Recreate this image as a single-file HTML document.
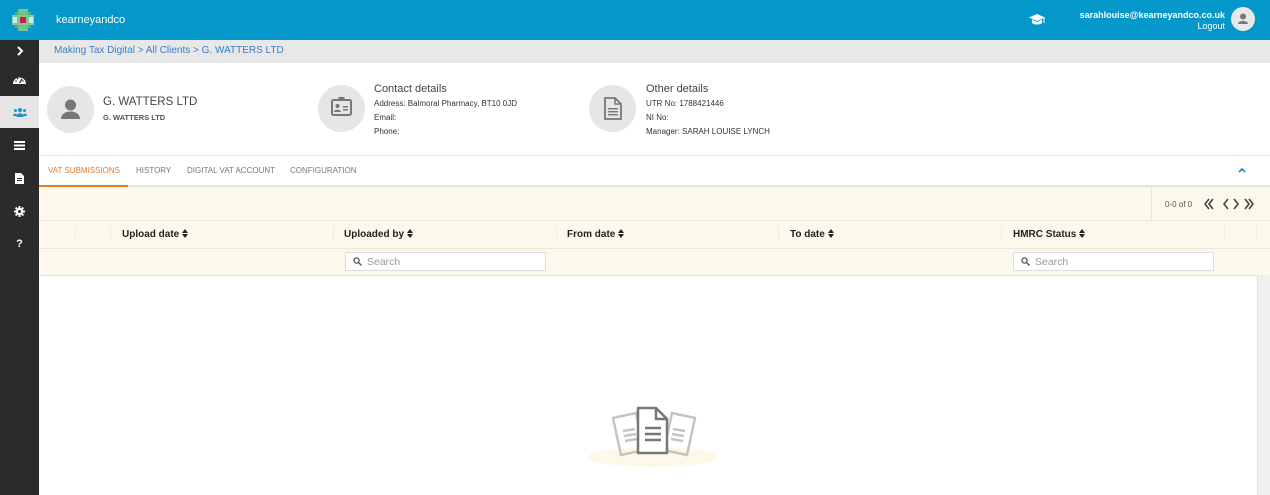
<!DOCTYPE html>
<html><head><style>
*{box-sizing:border-box;margin:0;padding:0}
body{width:1270px;height:495px;overflow:hidden;font-family:"Liberation Sans",sans-serif;background:#fff;position:relative;color:#333}
.abs{position:absolute}
#top{left:0;top:0;width:1270px;height:40px;background:#0398c9}
#side{left:0;top:40px;width:39px;height:455px;background:#2b2b2b}
.si{position:absolute;left:0;width:39px;height:32px;display:flex;align-items:center;justify-content:center;color:#fff;font-size:11px;font-weight:bold}
#bc{left:39px;top:40px;width:1231px;height:23px;background:#e8e8e8;font-size:10px;color:#3a7dc4;padding:5px 0 0 15px}
.circ{position:absolute;width:47px;height:47px;border-radius:50%;background:#e6e6e6}
.small{font-size:8px;color:#333;line-height:14px}
.tab{position:absolute;top:166px;font-size:8px;color:#777}
.hd{position:absolute;top:229px;font-size:10px;font-weight:bold;color:#222}
.hd svg{margin-left:3px;vertical-align:-1px}
.srch{position:absolute;top:252px;width:201px;height:19px;border:1px solid #ddd;background:#fff;font-size:10.5px;color:#999;padding:3px 0 0 21px}
.srch svg{position:absolute;left:7px;top:4px}
.sep{position:absolute;top:226px;width:1px;height:14px;background:#f1ecdf}
</style></head><body>
<div id="top" class="abs">
 <svg class="abs" style="left:10px;top:7px" width="26" height="26" viewBox="0 0 26 26">
  <rect x="8" y="2" width="10" height="22" fill="#8fd18a" opacity=".8"/><rect x="2" y="8" width="22" height="10" fill="#a7dca0" opacity=".8"/>
  <rect x="5" y="5" width="16" height="16" fill="#6cc36a" opacity=".6"/><rect x="3" y="10" width="4" height="6" fill="#cfe8f5"/><rect x="19" y="10" width="4" height="6" fill="#cfe8f5"/>
  <rect x="10" y="10" width="6" height="6" fill="#d6145f"/></svg>
 <div class="abs" style="left:56px;top:14px;color:#fff;font-size:11px">kearneyandco</div>
 <svg class="abs" style="left:1029px;top:13px" width="16" height="13" viewBox="0 0 16 13"><path d="M8 1L0 4.5 8 8 16 4.5z" fill="#fff"/><path d="M3 6.5v3.5c2 2 8 2 10 0V6.5L8 9z" fill="#fff"/><path d="M15 5v5" stroke="#fff"/></svg>
 <div class="abs" style="right:45px;top:10px;color:#fff;font-size:9px;font-weight:bold;text-align:right;line-height:11px">sarahlouise@kearneyandco.co.uk<br><span style="font-weight:normal">Logout</span></div>
 <div class="abs" style="left:1231px;top:7px;width:24px;height:24px;border-radius:50%;background:#e8e8e8"><svg width="24" height="24" viewBox="0 0 24 24"><circle cx="12" cy="9.5" r="3" fill="#777"/><path d="M7 17c0-4 10-4 10 0z" fill="#777"/></svg></div>
</div>
<div id="side" class="abs">
 <div class="si" style="top:0;height:22px"><svg width="8" height="10"><path d="M2 1l4 4-4 4" fill="none" stroke="#fff" stroke-width="2"/></svg></div>
 <div class="si" style="top:24px"><svg width="13" height="10" viewBox="0 0 13 10"><path d="M0 9a6.5 6.5 0 0 1 13 0z" fill="#fff"/><path d="M6.5 8L9 4" stroke="#2b2b2b" stroke-width="1.3"/><circle cx="3" cy="6" r=".8" fill="#2b2b2b"/><circle cx="4.5" cy="3.5" r=".8" fill="#2b2b2b"/><circle cx="10" cy="6" r=".8" fill="#2b2b2b"/></svg></div>
 <div class="si" style="top:56px;background:#e5e5e5;color:#1a8fd0">
  <svg width="14" height="10" viewBox="0 0 14 10"><circle cx="7" cy="3" r="2" fill="#1a8fd0"/><circle cx="2.5" cy="3.5" r="1.5" fill="#1a8fd0"/><circle cx="11.5" cy="3.5" r="1.5" fill="#1a8fd0"/><path d="M3.5 10c0-5 7-5 7 0zM0 9c0-3 4-3 4-1v1zM14 9c0-3-4-3-4-1v1z" fill="#1a8fd0"/></svg></div>
 <div class="si" style="top:89px"><svg width="11" height="9"><rect y="0" width="11" height="2" fill="#fff"/><rect y="3.5" width="11" height="2" fill="#fff"/><rect y="7" width="11" height="2" fill="#fff"/></svg></div>
 <div class="si" style="top:122px"><svg width="9" height="11"><path d="M0 0h6l3 3v8H0z" fill="#fff"/><rect x="2" y="5" width="5" height="1" fill="#2b2b2b"/><rect x="2" y="7" width="5" height="1" fill="#2b2b2b"/></svg></div>
 <div class="si" style="top:155px"><svg width="11" height="11" viewBox="0 0 11 11"><circle cx="5.5" cy="5.5" r="3.6" fill="#fff"/><path d="M5.5 0v11M0 5.5h11M1.6 1.6l7.8 7.8M9.4 1.6l-7.8 7.8" stroke="#fff" stroke-width="2"/><circle cx="5.5" cy="5.5" r="1.5" fill="#2b2b2b"/></svg></div>
 <div class="si" style="top:188px">?</div>
</div>
<div id="bc" class="abs">Making Tax Digital &gt; All Clients &gt; G. WATTERS LTD</div>
<div class="circ" style="left:47px;top:86px"><svg width="47" height="47" viewBox="0 0 47 47"><circle cx="23.5" cy="19" r="5.5" fill="#777"/><path d="M14 33c0-10 19-10 19 0z" fill="#777"/></svg></div>
<div class="abs" style="left:103px;top:96px;font-size:11.5px;color:#444">G. WATTERS LTD</div>
<div class="abs small" style="left:103px;top:111px;font-weight:bold;color:#555;font-size:7.5px">G. WATTERS LTD</div>
<div class="circ" style="left:318px;top:85px"><svg width="47" height="47" viewBox="0 0 47 47"><rect x="14" y="15" width="19" height="15" rx="1.5" fill="none" stroke="#777" stroke-width="2"/><rect x="20.5" y="12" width="6" height="4" fill="#777"/><circle cx="19.5" cy="21" r="2" fill="#777"/><path d="M16 27c0-3 7-3 7 0z" fill="#777"/><rect x="25" y="21" width="5" height="1.5" fill="#777"/><rect x="25" y="24" width="5" height="1.5" fill="#777"/></svg></div>
<div class="abs" style="left:374px;top:83px;font-size:11px;color:#444">Contact details</div>
<div class="abs small" style="left:374px;top:97px">Address: Balmoral Pharmacy, BT10 0JD<br>Email:<br>Phone:</div>
<div class="circ" style="left:589px;top:85px"><svg width="47" height="47" viewBox="0 0 47 47"><path d="M16 13h10l6 6v15H16z" fill="none" stroke="#777" stroke-width="1.8"/><path d="M26 13v6h6" fill="none" stroke="#777" stroke-width="1.5"/><rect x="19" y="23" width="10" height="1.4" fill="#777"/><rect x="19" y="26" width="10" height="1.4" fill="#777"/><rect x="19" y="29" width="10" height="1.4" fill="#777"/></svg></div>
<div class="abs" style="left:646px;top:83px;font-size:11px;color:#444">Other details</div>
<div class="abs small" style="left:646px;top:97px">UTR No: 1788421446<br>NI No:<br>Manager: SARAH LOUISE LYNCH</div>
<div class="abs" style="left:39px;top:155px;width:1231px;height:1px;background:#e4e4e4"></div>
<div class="tab" style="left:48px;color:#e07b2a">VAT SUBMISSIONS</div>
<div class="tab" style="left:136px">HISTORY</div>
<div class="tab" style="left:187px">DIGITAL VAT ACCOUNT</div>
<div class="tab" style="left:290px">CONFIGURATION</div>
<svg class="abs" style="left:1238px;top:167px" width="8" height="6"><path d="M1 5l3-3 3 3" fill="none" stroke="#1a8fd0" stroke-width="1.8"/></svg>
<div class="abs" style="left:39px;top:185px;width:1231px;height:2px;background:#e2e2e2"></div>
<div class="abs" style="left:39px;top:185px;width:89px;height:2px;background:#e07b2a"></div>
<div class="abs" style="left:39px;top:187px;width:1231px;height:88px;background:#fdf8ec"></div>
<div class="abs" style="left:39px;top:220px;width:1231px;height:1px;background:#ece6d6"></div>
<div class="abs" style="left:39px;top:248px;width:1231px;height:1px;background:#ece6d6"></div>
<div class="abs" style="left:39px;top:275px;width:1218px;height:1px;background:#e6e0d0"></div>
<div class="abs" style="left:1151px;top:187px;width:1px;height:33px;background:#ece6d6"></div>
<div class="abs" style="left:1165px;top:200px;font-size:8px;color:#555">0-0 of 0</div>
<svg class="abs" style="left:1204px;top:198px" width="50" height="12" viewBox="0 0 50 12" fill="none" stroke="#444" stroke-width="1.6"><path d="M5 1L1 6l4 5M9 1L5 6l4 5M24 1l-4 5 4 5M30 1l4 5-4 5M41 1l4 5-4 5M45 1l4 5-4 5"/></svg>
<div class="sep" style="left:75px"></div><div class="sep" style="left:110px"></div><div class="sep" style="left:333px"></div><div class="sep" style="left:556px"></div><div class="sep" style="left:778px"></div><div class="sep" style="left:1001px"></div><div class="sep" style="left:1224px"></div><div class="sep" style="left:1256px"></div>
<div class="hd" style="left:122px">Upload date<svg width="6" height="9"><path d="M0 4L3 0l3 4zM0 5l3 4 3-4z" fill="#222"/></svg></div>
<div class="hd" style="left:344px">Uploaded by<svg width="6" height="9"><path d="M0 4L3 0l3 4zM0 5l3 4 3-4z" fill="#222"/></svg></div>
<div class="hd" style="left:567px">From date<svg width="6" height="9"><path d="M0 4L3 0l3 4zM0 5l3 4 3-4z" fill="#222"/></svg></div>
<div class="hd" style="left:790px">To date<svg width="6" height="9"><path d="M0 4L3 0l3 4zM0 5l3 4 3-4z" fill="#222"/></svg></div>
<div class="hd" style="left:1013px">HMRC Status<svg width="6" height="9"><path d="M0 4L3 0l3 4zM0 5l3 4 3-4z" fill="#222"/></svg></div>
<div class="srch" style="left:345px"><svg width="9" height="9"><circle cx="3.5" cy="3.5" r="2.6" fill="none" stroke="#555" stroke-width="1.3"/><path d="M5.5 5.5L8.5 8.5" stroke="#555" stroke-width="1.4"/></svg>Search</div>
<div class="srch" style="left:1013px"><svg width="9" height="9"><circle cx="3.5" cy="3.5" r="2.6" fill="none" stroke="#555" stroke-width="1.3"/><path d="M5.5 5.5L8.5 8.5" stroke="#555" stroke-width="1.4"/></svg>Search</div>
<div class="abs" style="left:1257px;top:275px;width:13px;height:220px;background:#f0f0f0;border-left:1px solid #e2e2e2"></div>
<div class="abs" style="left:588px;top:447px;width:130px;height:20px;border-radius:50%;background:#fdf8ea"></div>
<svg class="abs" style="left:608px;top:404px" width="92" height="54" viewBox="0 0 92 54">
 <g fill="none" stroke="#c4c4c4" stroke-width="2.5"><path d="M5 14l23-5 8 37-23 5z"/><path d="M87 14l-23-5-8 37 23 5z"/>
 <path d="M15 27l12-2M16 32l12-2M17 37l12-2M77 27l-12-2M76 32l-12-2M75 37l-12-2"/></g>
 <path d="M30 4h18l11 11v34H30z" fill="#fff" stroke="#777" stroke-width="2.5" stroke-linejoin="round"/>
 <path d="M48 4v11h11" fill="none" stroke="#777" stroke-width="2.5"/>
 <path d="M37 24h16M37 30h16M37 36h16" stroke="#777" stroke-width="2.5"/>
</svg>
</body></html>
